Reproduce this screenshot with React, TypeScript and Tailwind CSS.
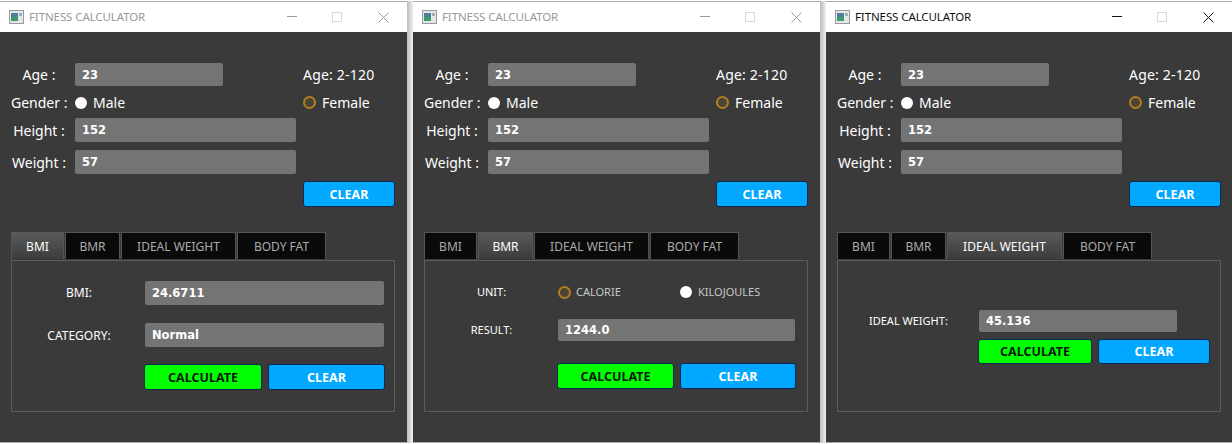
import type { ReactNode } from "react";

const tabs = [
  { label: "BMI", width: "w-[53px]" },
  { label: "BMR", width: "w-[55px]" },
  { label: "IDEAL WEIGHT", width: "w-[115px]" },
  { label: "BODY FAT", width: "w-[89px]" },
];

function AppIcon() {
  return (
    <svg width="15" height="14" viewBox="0 0 15 14" className="shrink-0">
      <rect x="0.5" y="0.5" width="14" height="13" fill="#e4e6e6" stroke="#9a9a9a" />
      <rect x="2" y="3" width="7" height="4" fill="#4d7f9c" />
      <rect x="2" y="7" width="7" height="4" fill="#3f9a6c" />
      <rect x="10" y="3" width="3" height="3" fill="#9db0b8" />
    </svg>
  );
}

function TitleBar({ active }: { active?: boolean }) {
  const ink = active ? "#111111" : "#9a9a9a";
  return (
    <div className="flex h-[30px] items-center bg-white pl-[9px]">
      <AppIcon />
      <span
        className={`ml-[5px] font-['Noto_Sans',sans-serif] text-[11.5px] tracking-[-0.1px] ${active ? "text-[#111]" : "text-[#999]"}`}
      >
        FITNESS CALCULATOR
      </span>
      <div className="ml-auto flex items-center pr-[18px]">
        <svg width="10" height="10" viewBox="0 0 10 10">
          <path d="M0 4.5H10" stroke={ink} />
        </svg>
        <svg width="10" height="10" viewBox="0 0 10 10" className="ml-[35px]">
          <rect x="0.5" y="0.5" width="9" height="9" fill="none" stroke="#d8d8d8" />
        </svg>
        <svg width="11" height="11" viewBox="0 0 11 11" className="ml-[36px]">
          <path d="M0.5 0.5L10.5 10.5M10.5 0.5L0.5 10.5" stroke={ink} />
        </svg>
      </div>
    </div>
  );
}

function Field({ value, className }: { value: string; className: string }) {
  return (
    <div
      className={`flex items-center rounded-[2px] bg-[#747474] pl-[7px] pt-[2px] font-['DejaVu_Sans',sans-serif] text-[11.5px] font-bold text-white ${className}`}
    >
      {value}
    </div>
  );
}

function Radio({ checked }: { checked?: boolean }) {
  return checked ? (
    <span className="size-[12px] shrink-0 rounded-full bg-white" />
  ) : (
    <span className="size-[13px] shrink-0 rounded-full border-[2px] border-[#b07f1e] bg-[#4a4336]" />
  );
}

function ActionButton({ label, className }: { label: string; className: string }) {
  return (
    <button
      className={`flex items-center justify-center rounded-[3px] border border-[#0b2a55] pt-[2px] font-['Noto_Sans',sans-serif] text-[12.5px] font-bold ${className}`}
    >
      {label}
    </button>
  );
}

function Window({
  selected,
  active,
  className,
  children,
}: {
  selected: string;
  active?: boolean;
  className: string;
  children: ReactNode;
}) {
  return (
    <div className={`flex h-[442px] shrink-0 flex-col border-t border-b border-[#a8a8a8] bg-[#3a3a3a] ${className}`}>
      <TitleBar active={active} />
      <div className="pl-[11px] pt-[31px] font-['Noto_Sans',sans-serif] text-[14px] text-white">
        <div className="-ml-[11px] flex h-[23px] items-center">
          <span className="w-[78px] text-center">Age :</span>
          <Field value="23" className="-ml-[3px] h-[23px] w-[148px]" />
          <span className="ml-[80px] tracking-[0.2px]">Age: 2-120</span>
        </div>
        <div className="-ml-[11px] mt-[5px] flex h-[23px] items-center">
          <span className="w-[75px] pl-[11px]">Gender :</span>
          <Radio checked />
          <span className="ml-[6px]">Male</span>
          <div className="ml-[178px] flex items-center">
            <Radio />
            <span className="ml-[6px]">Female</span>
          </div>
        </div>
        <div className="-ml-[11px] mt-[4px] flex h-[24px] items-center">
          <span className="w-[78px] text-center">Height :</span>
          <Field value="152" className="-ml-[3px] h-[24px] w-[221px]" />
        </div>
        <div className="-ml-[11px] mt-[8px] flex h-[24px] items-center">
          <span className="w-[78px] text-center">Weight :</span>
          <Field value="57" className="-ml-[3px] h-[24px] w-[221px]" />
        </div>
        <div className="mt-[7px] flex">
          <ActionButton label="CLEAR" className="ml-[292px] h-[26px] w-[92px] bg-[#00a8ff] text-white" />
        </div>
      </div>
      <div className="ml-[11px] mt-[25px] flex h-[28px] w-[384px] gap-px font-['Noto_Sans',sans-serif] text-[12px]">
        {tabs.map((tab) => (
          <div
            key={tab.label}
            className={`flex h-[27px] items-center justify-center border-x border-t border-[#555] pt-[2px] ${tab.width} ${
              tab.label === selected
                ? "bg-gradient-to-b from-[#5a5a5a] to-[#3c3c3c] text-white"
                : "bg-[#0a0a0a] text-[#aaa]"
            }`}
          >
            {tab.label}
          </div>
        ))}
      </div>
      <div className="ml-[11px] flex h-[152px] w-[384px] flex-col border border-[#5c5c5c] font-['Noto_Sans',sans-serif] text-[12px] text-white">
        {children}
      </div>
    </div>
  );
}

function Gutter() {
  return <div className="h-[442px] w-[6px] shrink-0 bg-gradient-to-r from-[#bcbcbc] to-[#f0f0f0]" />;
}

function BmiPanel() {
  return (
    <div className="pl-[33px] pt-[20px]">
      <div className="flex h-[24px] items-center">
        <span className="w-[68px] text-center">BMI:</span>
        <Field value="24.6711" className="ml-[32px] h-[24px] w-[239px]" />
      </div>
      <div className="mt-[18px] flex h-[24px] items-center">
        <span className="w-[68px] whitespace-nowrap pt-[2px] text-center">CATEGORY:</span>
        <Field value="Normal" className="ml-[32px] h-[24px] w-[239px]" />
      </div>
      <div className="ml-[99px] mt-[17px] flex gap-[6px]">
        <ActionButton label="CALCULATE" className="h-[26px] w-[118px] bg-[#00ff00] text-[#081a08]" />
        <ActionButton label="CLEAR" className="h-[26px] w-[117px] bg-[#00a8ff] text-white" />
      </div>
    </div>
  );
}

function BmrPanel() {
  return (
    <div className="pt-[21px]">
      <div className="flex h-[20px] items-center text-[11px]">
        <span className="w-[133px] text-center">UNIT:</span>
        <Radio />
        <span className="ml-[5px] w-[104px] text-[#c8c8c8]">CALORIE</span>
        <Radio checked />
        <span className="ml-[6px] text-[#c8c8c8]">KILOJOULES</span>
      </div>
      <div className="mt-[17px] flex h-[22px] items-center text-[11px]">
        <span className="w-[133px] text-center">RESULT:</span>
        <Field value="1244.0" className="h-[22px] w-[237px]" />
      </div>
      <div className="ml-[132px] mt-[22px] flex gap-[6px]">
        <ActionButton label="CALCULATE" className="h-[26px] w-[117px] bg-[#00ff00] text-[#081a08]" />
        <ActionButton label="CLEAR" className="h-[26px] w-[116px] bg-[#00a8ff] text-white" />
      </div>
    </div>
  );
}

function IdealPanel() {
  return (
    <div className="pt-[49px]">
      <div className="flex h-[22px] items-center text-[11px]">
        <span className="w-[141px] pl-[31px]">IDEAL WEIGHT:</span>
        <Field value="45.136" className="h-[22px] w-[198px]" />
      </div>
      <div className="ml-[140px] mt-[7px] flex gap-[6px]">
        <ActionButton label="CALCULATE" className="h-[25px] w-[114px] bg-[#00ff00] text-[#081a08]" />
        <ActionButton label="CLEAR" className="h-[25px] w-[112px] bg-[#00a8ff] text-white" />
      </div>
    </div>
  );
}

export default function App() {
  return (
    <div className="flex h-[444px] w-[1232px] overflow-hidden bg-white pt-px">
      <Window selected="BMI" className="w-[407px]">
        <BmiPanel />
      </Window>
      <Gutter />
      <Window selected="BMR" className="w-[407px]">
        <BmrPanel />
      </Window>
      <Gutter />
      <Window selected="IDEAL WEIGHT" active className="w-[406px]">
        <IdealPanel />
      </Window>
    </div>
  );
}
